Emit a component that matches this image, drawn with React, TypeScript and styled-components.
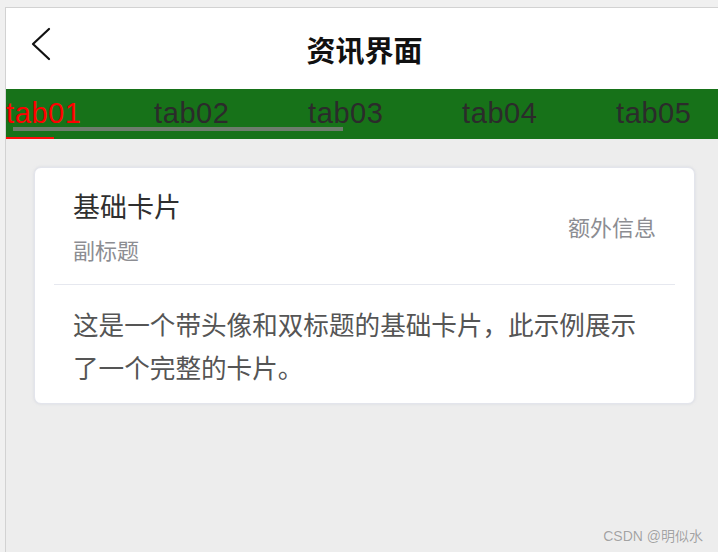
import React from "react";
import styled, { createGlobalStyle } from "styled-components";

const Global = createGlobalStyle`
  html, body { margin: 0; padding: 0; }
  body {
    width: 718px;
    height: 552px;
    overflow: hidden;
    background: #f0f0f0;
    font-family: "Noto Sans CJK SC", "Noto Sans", sans-serif;
  }
`;

const Frame = styled.div`
  position: relative;
  margin: 7px 0 0 5px;
  width: 717px;
  height: 545px;
  border-left: 1px solid #d2d2d2;
  border-top: 1px solid #d2d2d2;
  background: #ededed;
  display: flex;
  flex-direction: column;
  overflow: hidden;
`;

const Header = styled.header`
  height: 81px;
  background: #ffffff;
  display: flex;
  align-items: center;
  justify-content: center;
  position: relative;
  flex-shrink: 0;
`;

const BackButton = styled.button`
  position: absolute;
  left: 17px;
  top: 16px;
  width: 36px;
  height: 40px;
  padding: 0;
  border: none;
  background: transparent;
  display: flex;
  align-items: center;
  justify-content: center;
`;

const Title = styled.h1`
  margin: 0;
  font-size: 29px;
  font-weight: 700;
  color: #111;
  line-height: 1;
  transform: translateY(1px);
`;

const TabBar = styled.nav`
  position: relative;
  height: 50px;
  background: #177219;
  display: flex;
  flex-shrink: 0;
`;

const Tab = styled.div<{ $w: number; $active?: boolean }>`
  position: relative;
  width: ${(p) => p.$w}px;
  flex-shrink: 0;
  font-family: "Liberation Sans", Arial, sans-serif;
  font-size: 29px;
  letter-spacing: 0.6px;
  line-height: 1;
  padding-top: 10px;
  color: ${(p) => (p.$active ? "#ff0000" : "#2b2b2b")};
`;

const ActiveLine = styled.span`
  position: absolute;
  left: 0;
  bottom: 0;
  width: 48px;
  height: 2px;
  background: #ff0a0a;
`;

const ScrollThumb = styled.span`
  position: absolute;
  left: 7px;
  top: 38px;
  width: 330px;
  height: 4px;
  background: #6d7d6c;
`;

const Content = styled.main`
  flex: 1;
  padding: 28px 28px 0 28px;
`;

const Card = styled.section`
  background: #fff;
  border: 1px solid #e3e5ec;
  border-radius: 7px;
  box-shadow: 0 0 3px rgba(200, 204, 216, 0.6);
  padding: 0 19px;
`;

const CardHead = styled.div`
  display: flex;
  align-items: center;
  justify-content: space-between;
  padding: 20px 19px 20px 19px;
  border-bottom: 1px solid #e6e8ef;
`;

const HeadText = styled.div`
  display: flex;
  flex-direction: column;
`;

const CardTitle = styled.div`
  font-size: 27px;
  line-height: 36px;
  color: #2f2f2f;
`;

const CardSub = styled.div`
  margin-top: 10px;
  font-size: 22px;
  line-height: 30px;
  color: #8c8d92;
`;

const Extra = styled.div`
  font-size: 22px;
  line-height: 30px;
  color: #8c8d92;
`;

const CardBody = styled.p`
  margin: 0;
  padding: 17px 19px 15px 19px;
  font-size: 25.6px;
  line-height: 43px;
  color: #555;
`;

const Watermark = styled.div`
  position: absolute;
  right: 20px;
  bottom: 8px;
  font-family: "Liberation Sans", "Noto Sans CJK SC", sans-serif;
  font-size: 14px;
  color: #a3a3a3;
  text-shadow: 0 0 1px #fff;
`;

const tabs = ["tab01", "tab02", "tab03", "tab04", "tab05"];
const widths = [148, 154, 154, 154, 154];

export default function App() {
  return (
    <>
      <Global />
      <Frame>
        <Header>
          <BackButton aria-label="back">
            <svg width="22" height="34" viewBox="0 0 22 34">
              <path d="M19 2 L3 17 L19 32" fill="none" stroke="#111" strokeWidth="2.2" strokeLinecap="round" strokeLinejoin="round" />
            </svg>
          </BackButton>
          <Title>资讯界面</Title>
        </Header>
        <TabBar>
          {tabs.map((t, i) => (
            <Tab key={t} $w={widths[i]} $active={i === 0}>
              {t}
              {i === 0 && <ActiveLine />}
            </Tab>
          ))}
          <ScrollThumb />
        </TabBar>
        <Content>
          <Card>
            <CardHead>
              <HeadText>
                <CardTitle>基础卡片</CardTitle>
                <CardSub>副标题</CardSub>
              </HeadText>
              <Extra>额外信息</Extra>
            </CardHead>
            <CardBody>这是一个带头像和双标题的基础卡片，此示例展示了一个完整的卡片。</CardBody>
          </Card>
        </Content>
        <Watermark>CSDN @明似水</Watermark>
      </Frame>
    </>
  );
}
